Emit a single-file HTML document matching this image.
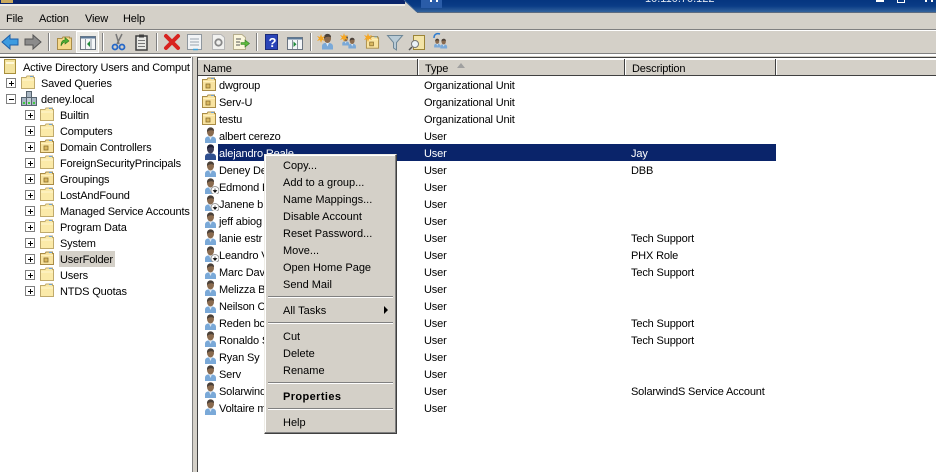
<!DOCTYPE html>
<html><head><meta charset="utf-8"><style>
html,body{margin:0;padding:0}
body{width:936px;height:472px;position:relative;overflow:hidden;background:#d4d0c8;font:11px/17px "Liberation Sans",sans-serif;letter-spacing:-.15px;color:#000}
.a,.t,.l,.m,.s{position:absolute;white-space:nowrap}
svg{position:absolute;overflow:visible}
.t{height:16px;line-height:16px;padding-top:1px}
.l{height:17px;line-height:17px;padding-top:2px}
.m{left:283px;height:17px;line-height:17px;padding-top:1px;letter-spacing:0}
.s{left:268px;width:125px;height:1px;background:#808080;border-bottom:1px solid #fff}
.v{position:absolute;top:33px;width:1px;height:18px;background:#808080;border-right:1px solid #fff}
</style></head><body>
<svg width="0" height="0" style="position:absolute"><defs>
<symbol id="fold" viewBox="0 0 16 16"><path d="M1.500 13.500V2.500H6L7 1H13.500V2.500H14.500V13.500Z" fill="#fbeaa9" stroke="#c0aa6c"/><path d="M2 5H14" stroke="#fff6d0"/><path d="M10 1.500H13" stroke="#6aa0d8"/></symbol>
<symbol id="ou" viewBox="0 0 16 16"><path d="M1.500 13.500V2.500H6L7 1H13.500V2.500H14.500V13.500Z" fill="#f8e3a0" stroke="#a98c47"/><path d="M2 4.500H14" stroke="#fff0bd"/><path d="M10 1.500H13" stroke="#6aa0d8"/><rect x="5" y="7" width="4" height="4" fill="#d9b860" stroke="#8a6d2c" stroke-width=".8"/></symbol>
<symbol id="user" viewBox="0 0 16 16"><path d="M2 16V12.500C2 10.500 4 9.500 5 9.500H9C11.500 9.500 13 11 13 13V16Z" fill="#7aa9d8"/><path d="M6 9.500L7.500 13L9 9.500Z" fill="#dce8f4"/><ellipse cx="7.500" cy="5" rx="3.500" ry="4.500" fill="#8a6b4f"/><path d="M4 5C3.700 1.200 6 .4 7.800 .4C10 .4 11.300 2.500 11 4C9 2.800 6 3 4 5Z" fill="#4a4038"/></symbol>
<symbol id="userd" viewBox="0 0 16 16"><path d="M2 16V12.500C2 10.500 4 9.500 5 9.500H9C11.500 9.500 13 11 13 13V16Z" fill="#2f4f8f"/><ellipse cx="7.500" cy="5" rx="3.500" ry="4.500" fill="#3e3d55"/><path d="M4 5C3.700 1.200 6 .4 7.800 .4C10 .4 11.300 2.500 11 4C9 2.800 6 3 4 5Z" fill="#1d1d33"/></symbol>
<symbol id="userx" viewBox="0 0 16 16"><use href="#user" width="16" height="16"/><circle cx="12" cy="12.500" r="4" fill="#fff" stroke="#9a9a9a"/><path d="M12 10.500V13M10.300 12.500H13.700L12 14.500Z" fill="#111" stroke="#111" stroke-width=".7"/></symbol>
</defs></svg>

<!-- title bar -->
<div class="a" style="left:0;top:0;width:405px;height:4px;background:#0a246a"></div>
<div class="a" style="left:0;top:4px;width:405px;height:2px;background:#eeece6"></div>
<div class="a" style="left:1px;top:0;width:12px;height:3px;background:#c9a85c"></div>
<svg style="left:0;top:0" width="936" height="14"><defs><linearGradient id="tb" x1="0" y1="0" x2="0" y2="1"><stop offset="0" stop-color="#05357f"/><stop offset=".5" stop-color="#0a3c86"/><stop offset="1" stop-color="#33639d"/></linearGradient></defs><path d="M404 0H936V12H417Z" fill="url(#tb)"/><path d="M417 12.500H936" stroke="#5c6b80"/><path d="M404 0L417 12" stroke="#3a5f92"/><rect x="421" y="0" width="21" height="8" fill="#2a5ca8"/></svg>
<div class="a" style="left:430px;top:-3px;width:2px;height:5px;background:#fff"></div><div class="a" style="left:436px;top:-3px;width:2px;height:5px;background:#fff"></div>
<div class="a" style="left:645px;top:-8px;color:#dfe6f0;line-height:14px;letter-spacing:0">10.110.70.122</div>
<div class="a" style="left:876px;top:0;width:8px;height:2px;background:#fff"></div>
<div class="a" style="left:897px;top:0;width:6px;height:2px;border:1px solid #fff;border-top:0"></div>
<div class="a" style="left:925px;top:0;width:2px;height:2px;background:#fff"></div><div class="a" style="left:931px;top:0;width:2px;height:2px;background:#fff"></div>

<!-- menu -->
<div class="l" style="left:6px;top:9px">File</div>
<div class="l" style="left:39px;top:9px">Action</div>
<div class="l" style="left:85px;top:9px">View</div>
<div class="l" style="left:123px;top:9px">Help</div>
<div class="a" style="left:0;top:29px;width:936px;height:1px;background:#808080"></div>
<div class="a" style="left:0;top:30px;width:936px;height:1px;background:#fff"></div>

<!-- toolbar -->
<div class="a" style="left:0;top:53px;width:936px;height:1px;background:#808080"></div>
<div class="a" style="left:0;top:54px;width:936px;height:2px;background:#fff"></div>
<div class="v" style="left:48px"></div><div class="v" style="left:102px"></div><div class="v" style="left:156px"></div><div class="v" style="left:256px"></div><div class="v" style="left:310px"></div>
<svg style="left:0;top:0" width="936" height="56">
<path d="M2 42L10 35V39H18V45H10V49Z" fill="#3d9be0" stroke="#1d5fa8"/>
<path d="M41 42L33 35V39H25V45H33V49Z" fill="#8b8b8b" stroke="#555"/>
<path d="M57.500 49.500V38.500H62L63 37H69.500V38H71.500V49.500Z" fill="#f5d98b" stroke="#a98c47"/><path d="M61 46C61 41 63 40 65 40V37.500L69 41L65 44V42C63 42 62 44 61 46Z" fill="#4fae35" stroke="#2c7a1c" stroke-width=".6"/>
<rect x="76.500" y="31.500" width="22" height="21" fill="#ecebe6" stroke="#fff"/>
<rect x="80.500" y="36.500" width="15" height="13" fill="#f4f6f8" stroke="#6b7480"/><path d="M81 37.500H95" stroke="#5b7896" stroke-width="2"/><path d="M85.500 39V49M91 39V49" stroke="#8b95a0"/><path d="M90 41V47L87 44Z" fill="#1e8a3a"/>
<path d="M122 34L117 44M116 34L119 44" stroke="#777" stroke-width="1.500"/><circle cx="115" cy="47" r="2.500" fill="none" stroke="#2668c8" stroke-width="1.800"/><circle cx="122" cy="47" r="2.500" fill="none" stroke="#2668c8" stroke-width="1.800"/>
<rect x="136" y="36" width="11" height="14" fill="#e8e8e4" stroke="#3f3f3f" stroke-width="1.500"/><rect x="139" y="34.500" width="5" height="3" fill="#3f3f3f"/><path d="M138 40.500H145M138 43.500H145M138 46.500H145" stroke="#777"/>
<path d="M166 36L178 48M178 36L166 48" stroke="#d8231f" stroke-width="4" stroke-linecap="round"/>
<rect x="187.500" y="34.500" width="14" height="15" fill="#f2f4f6" stroke="#8f979e"/><path d="M190 39H199M190 42H199M190 45H199" stroke="#9aa4ad"/><path d="M193 49.500H198" stroke="#3ea4dc" stroke-width="1.500"/>
<path d="M212.500 34.500H221L224.500 37.500V49.500H212.500Z" fill="#f1f1ef" stroke="#b5b5b5"/><circle cx="218.500" cy="42.500" r="3.200" fill="none" stroke="#888" stroke-width="1.800"/>
<path d="M233.500 34.500H242L245.500 37.500V49.500H233.500Z" fill="#fbf6dc" stroke="#b5ad8d"/><path d="M236 39H241M236 42H240M236 45H240" stroke="#555"/><path d="M241 42.500H245V40L249.500 43.500L245 47V44.500H241Z" fill="#5cb93c" stroke="#328024" stroke-width=".6"/>
<rect x="265.500" y="34.500" width="12" height="15" fill="#2a44b8" stroke="#1a2a78"/>
<text x="268.500" y="47" font-family="Liberation Sans" font-size="13" font-weight="bold" fill="#fff">?</text>
<rect x="287.500" y="37.500" width="15" height="12" fill="#f4f6f8" stroke="#6b7480"/><path d="M288 38.500H302" stroke="#5b7896" stroke-width="2"/><path d="M292.500 40V49M297.500 40V49" stroke="#8b95a0"/><path d="M293.500 41.500V47L296.500 44.200Z" fill="#1e8a3a"/>
</svg>
<svg style="left:320px;top:33px" width="16" height="17"><use href="#user" width="16" height="17"/></svg>
<svg style="left:347px;top:36px" width="11" height="14"><use href="#user" width="11" height="14"/></svg>
<svg style="left:341px;top:34px" width="10" height="13"><use href="#user" width="10" height="13"/></svg>
<svg style="left:365px;top:35px" width="15" height="16"><use href="#ou" width="15" height="16"/></svg>
<svg style="left:0;top:0" width="936" height="56">
<path d="M321 34L322 37L325 36L323 38.500L325 41L322 40L321 43L320 40L317 41L319 38.500L317 36L320 37Z" fill="#f5a623"/>
<path d="M344 33L345 36L348 35L346 37.500L348 40L345 39L344 42L343 39L340 40L342 37.500L340 35L343 36Z" fill="#f5a623"/>
<path d="M368 33L369 36L372 35L370 37.500L372 40L369 39L368 42L367 39L364 40L366 37.500L364 35L367 36Z" fill="#f5a623"/>
<path d="M387.500 35.500H402.500L396.500 42.500V50L393.500 48V42.500Z" fill="#b9cbd6" stroke="#6e8797"/>
<rect x="413.500" y="35.500" width="11" height="14" fill="#f3e4a7" stroke="#9b8436"/><circle cx="415" cy="44" r="3.500" fill="#eaf2f8" stroke="#777"/><path d="M412 47L409 50" stroke="#555" stroke-width="1.500"/>
<path d="M434 38C434 34 437 33 440 34" fill="none" stroke="#2a7ad0" stroke-width="1.500"/>
</svg>
<svg style="left:439px;top:37px" width="10" height="13"><use href="#user" width="10" height="13"/></svg>
<svg style="left:433px;top:37px" width="9" height="12"><use href="#user" width="9" height="12"/></svg>

<!-- panes -->
<div class="a" style="left:0;top:57px;width:192px;height:415px;background:#fff;border-top:1px solid #404040;box-sizing:border-box"></div>
<div class="a" style="left:191px;top:57px;width:1px;height:415px;background:#fff"></div>
<div class="a" style="left:192px;top:57px;width:1px;height:415px;background:#808080"></div>
<div class="a" style="left:197px;top:57px;width:739px;height:415px;background:#fff;border-left:1px solid #404040;border-top:1px solid #404040;box-sizing:border-box"></div>

<!-- tree -->
<svg style="left:3px;top:59px" width="14" height="16"><rect x="1.500" y=".5" width="11" height="14" fill="#f3e3a0" stroke="#a88f3c"/><rect x="3" y="3" width="8" height="2" fill="#fff8d8"/></svg>
<div class="t" style="left:23px;top:59px;width:167px;overflow:hidden">Active Directory Users and Computers</div>

<svg style="left:0;top:70px" width="60" height="240" fill="none">
<g stroke="#808080"><rect x="6.500" y="8.500" width="9" height="9" fill="#fff"/><rect x="6.500" y="24.500" width="9" height="9" fill="#fff"/>
<rect x="25.500" y="40.500" width="9" height="9" fill="#fff"/><rect x="25.500" y="56.500" width="9" height="9" fill="#fff"/><rect x="25.500" y="72.500" width="9" height="9" fill="#fff"/><rect x="25.500" y="88.500" width="9" height="9" fill="#fff"/><rect x="25.500" y="104.500" width="9" height="9" fill="#fff"/><rect x="25.500" y="120.500" width="9" height="9" fill="#fff"/><rect x="25.500" y="136.500" width="9" height="9" fill="#fff"/><rect x="25.500" y="152.500" width="9" height="9" fill="#fff"/><rect x="25.500" y="168.500" width="9" height="9" fill="#fff"/><rect x="25.500" y="184.500" width="9" height="9" fill="#fff"/><rect x="25.500" y="200.500" width="9" height="9" fill="#fff"/><rect x="25.500" y="216.500" width="9" height="9" fill="#fff"/></g>
<path stroke="#000" d="M9 13.500H14M11.500 11V16M9 29.500H14
M28 45.500H33M30.500 43V48M28 61.500H33M30.500 59V64M28 77.500H33M30.500 75V80M28 93.500H33M30.500 91V96M28 109.500H33M30.500 107V112M28 125.500H33M30.500 123V128M28 141.500H33M30.500 139V144M28 157.500H33M30.500 155V160M28 173.500H33M30.500 171V176M28 189.500H33M30.500 187V192M28 205.500H33M30.500 203V208M28 221.500H33M30.500 219V224"/>
</svg>

<svg style="left:20px;top:75px" width="16" height="16"><use href="#fold" width="16" height="16"/></svg>
<svg style="left:21px;top:91px" width="16" height="16"><rect x="5.500" y=".5" width="5" height="7" fill="#a9b7c4" stroke="#56646f"/><rect x=".5" y="6.500" width="5" height="8" fill="#a9b7c4" stroke="#56646f"/><rect x="5.500" y="6.500" width="5" height="8" fill="#c2cdd6" stroke="#56646f"/><rect x="10.500" y="6.500" width="5" height="8" fill="#a9b7c4" stroke="#56646f"/><rect x="2" y="11" width="2" height="2" fill="#3ecb3e"/><rect x="7" y="11" width="2" height="2" fill="#3ecb3e"/><rect x="12" y="11" width="2" height="2" fill="#3ecb3e"/></svg>
<div class="t" style="left:41px;top:75px">Saved Queries</div>
<div class="t" style="left:41px;top:91px">deney.local</div>

<svg style="left:39px;top:107px" width="16" height="16"><use href="#fold" width="16" height="16"/></svg>
<svg style="left:39px;top:123px" width="16" height="16"><use href="#fold" width="16" height="16"/></svg>
<svg style="left:39px;top:139px" width="16" height="16"><use href="#ou" width="16" height="16"/></svg>
<svg style="left:39px;top:155px" width="16" height="16"><use href="#fold" width="16" height="16"/></svg>
<svg style="left:39px;top:171px" width="16" height="16"><use href="#ou" width="16" height="16"/></svg>
<svg style="left:39px;top:187px" width="16" height="16"><use href="#fold" width="16" height="16"/></svg>
<svg style="left:39px;top:203px" width="16" height="16"><use href="#fold" width="16" height="16"/></svg>
<svg style="left:39px;top:219px" width="16" height="16"><use href="#fold" width="16" height="16"/></svg>
<svg style="left:39px;top:235px" width="16" height="16"><use href="#fold" width="16" height="16"/></svg>
<svg style="left:39px;top:251px" width="16" height="16"><use href="#ou" width="16" height="16"/></svg>
<svg style="left:39px;top:267px" width="16" height="16"><use href="#fold" width="16" height="16"/></svg>
<svg style="left:39px;top:283px" width="16" height="16"><use href="#fold" width="16" height="16"/></svg>
<div class="a" style="left:59px;top:251px;width:56px;height:16px;background:#d4d0c8"></div>
<div class="t" style="left:60px;top:107px">Builtin</div>
<div class="t" style="left:60px;top:123px">Computers</div>
<div class="t" style="left:60px;top:139px">Domain Controllers</div>
<div class="t" style="left:60px;top:155px">ForeignSecurityPrincipals</div>
<div class="t" style="left:60px;top:171px">Groupings</div>
<div class="t" style="left:60px;top:187px">LostAndFound</div>
<div class="t" style="left:60px;top:203px">Managed Service Accounts</div>
<div class="t" style="left:60px;top:219px">Program Data</div>
<div class="t" style="left:60px;top:235px">System</div>
<div class="t" style="left:60px;top:251px">UserFolder</div>
<div class="t" style="left:60px;top:267px">Users</div>
<div class="t" style="left:60px;top:283px">NTDS Quotas</div>

<!-- header -->
<div class="a" style="left:198px;top:59px;width:738px;height:15px;background:#d4d0c8;border-bottom:1px solid #808080;border-top:1px solid #fff"></div>
<div class="a" style="left:198px;top:76px;width:738px;height:1px;background:#fff"></div>
<div class="a" style="left:198px;top:75px;width:738px;height:1px;background:#404040"></div>
<div class="a" style="left:417px;top:59px;width:1px;height:16px;background:#404040"></div><div class="a" style="left:418px;top:59px;width:1px;height:16px;background:#fff"></div>
<div class="a" style="left:624px;top:59px;width:1px;height:16px;background:#404040"></div><div class="a" style="left:625px;top:59px;width:1px;height:16px;background:#fff"></div>
<div class="a" style="left:775px;top:59px;width:1px;height:16px;background:#404040"></div><div class="a" style="left:776px;top:59px;width:1px;height:16px;background:#fff"></div>
<div class="l" style="left:203px;top:59px">Name</div>
<div class="l" style="left:425px;top:59px">Type</div>
<div class="l" style="left:632px;top:59px">Description</div>
<svg style="left:457px;top:63px" width="10" height="6"><path d="M4 0L8 5H0Z" fill="#a0a0a0"/></svg>

<!-- selection -->
<div class="a" style="left:218px;top:144px;width:558px;height:17px;background:#0a246a"></div>

<!-- list icons -->
<svg style="left:201px;top:77px" width="16" height="16"><use href="#ou" width="16" height="16"/></svg>
<svg style="left:201px;top:94px" width="16" height="16"><use href="#ou" width="16" height="16"/></svg>
<svg style="left:201px;top:111px" width="16" height="16"><use href="#ou" width="16" height="16"/></svg>
<svg style="left:203px;top:127px" width="16" height="16"><use href="#user" width="16" height="16"/></svg>
<svg style="left:203px;top:144px" width="16" height="16"><use href="#userd" width="16" height="16"/></svg>
<svg style="left:203px;top:161px" width="16" height="16"><use href="#user" width="16" height="16"/></svg>
<svg style="left:203px;top:178px" width="16" height="16"><use href="#userx" width="16" height="16"/></svg>
<svg style="left:203px;top:195px" width="16" height="16"><use href="#userx" width="16" height="16"/></svg>
<svg style="left:203px;top:212px" width="16" height="16"><use href="#user" width="16" height="16"/></svg>
<svg style="left:203px;top:229px" width="16" height="16"><use href="#user" width="16" height="16"/></svg>
<svg style="left:203px;top:246px" width="16" height="16"><use href="#userx" width="16" height="16"/></svg>
<svg style="left:203px;top:263px" width="16" height="16"><use href="#user" width="16" height="16"/></svg>
<svg style="left:203px;top:280px" width="16" height="16"><use href="#user" width="16" height="16"/></svg>
<svg style="left:203px;top:297px" width="16" height="16"><use href="#user" width="16" height="16"/></svg>
<svg style="left:203px;top:314px" width="16" height="16"><use href="#user" width="16" height="16"/></svg>
<svg style="left:203px;top:331px" width="16" height="16"><use href="#user" width="16" height="16"/></svg>
<svg style="left:203px;top:348px" width="16" height="16"><use href="#user" width="16" height="16"/></svg>
<svg style="left:203px;top:365px" width="16" height="16"><use href="#user" width="16" height="16"/></svg>
<svg style="left:203px;top:382px" width="16" height="16"><use href="#user" width="16" height="16"/></svg>
<svg style="left:203px;top:399px" width="16" height="16"><use href="#user" width="16" height="16"/></svg>

<!-- names -->
<div class="l" style="left:219px;top:76px">dwgroup</div>
<div class="l" style="left:219px;top:93px">Serv-U</div>
<div class="l" style="left:219px;top:110px">testu</div>
<div class="l" style="left:219px;top:127px">albert cerezo</div>
<div class="l" style="left:219px;top:144px;color:#fff">alejandro Reale</div>
<div class="l" style="left:219px;top:161px">Deney De</div>
<div class="l" style="left:219px;top:178px">Edmond B</div>
<div class="l" style="left:219px;top:195px">Janene b</div>
<div class="l" style="left:219px;top:212px">jeff abiog</div>
<div class="l" style="left:219px;top:229px">lanie estr</div>
<div class="l" style="left:219px;top:246px">Leandro V</div>
<div class="l" style="left:219px;top:263px">Marc Dav</div>
<div class="l" style="left:219px;top:280px">Melizza B</div>
<div class="l" style="left:219px;top:297px">Neilson C</div>
<div class="l" style="left:219px;top:314px">Reden bc</div>
<div class="l" style="left:219px;top:331px">Ronaldo S</div>
<div class="l" style="left:219px;top:348px">Ryan Sy</div>
<div class="l" style="left:219px;top:365px">Serv</div>
<div class="l" style="left:219px;top:382px">Solarwinds</div>
<div class="l" style="left:219px;top:399px">Voltaire m</div>

<!-- types -->
<div class="l" style="left:424px;top:76px">Organizational Unit</div>
<div class="l" style="left:424px;top:93px">Organizational Unit</div>
<div class="l" style="left:424px;top:110px">Organizational Unit</div>
<div class="l" style="left:424px;top:127px">User</div>
<div class="l" style="left:424px;top:144px;color:#fff">User</div>
<div class="l" style="left:424px;top:161px">User</div>
<div class="l" style="left:424px;top:178px">User</div>
<div class="l" style="left:424px;top:195px">User</div>
<div class="l" style="left:424px;top:212px">User</div>
<div class="l" style="left:424px;top:229px">User</div>
<div class="l" style="left:424px;top:246px">User</div>
<div class="l" style="left:424px;top:263px">User</div>
<div class="l" style="left:424px;top:280px">User</div>
<div class="l" style="left:424px;top:297px">User</div>
<div class="l" style="left:424px;top:314px">User</div>
<div class="l" style="left:424px;top:331px">User</div>
<div class="l" style="left:424px;top:348px">User</div>
<div class="l" style="left:424px;top:365px">User</div>
<div class="l" style="left:424px;top:382px">User</div>
<div class="l" style="left:424px;top:399px">User</div>

<!-- descriptions -->
<div class="l" style="left:631px;top:144px;color:#fff">Jay</div>
<div class="l" style="left:631px;top:161px">DBB</div>
<div class="l" style="left:631px;top:229px">Tech Support</div>
<div class="l" style="left:631px;top:246px">PHX Role</div>
<div class="l" style="left:631px;top:263px">Tech Support</div>
<div class="l" style="left:631px;top:314px">Tech Support</div>
<div class="l" style="left:631px;top:331px">Tech Support</div>
<div class="l" style="left:631px;top:382px">SolarwindS Service Account</div>

<!-- context menu -->
<div class="a" style="left:264px;top:154px;width:133px;height:280px;background:#d4d0c8;box-sizing:border-box;border:1px solid;border-color:#eeece6 #404040 #404040 #eeece6;box-shadow:inset -1px -1px 0 #808080,inset 1px 1px 0 #fff"></div>
<div class="m" style="top:157px">Copy...</div>
<div class="m" style="top:174px">Add to a group...</div>
<div class="m" style="top:191px">Name Mappings...</div>
<div class="m" style="top:208px">Disable Account</div>
<div class="m" style="top:225px">Reset Password...</div>
<div class="m" style="top:242px">Move...</div>
<div class="m" style="top:259px">Open Home Page</div>
<div class="m" style="top:276px">Send Mail</div>
<div class="s" style="top:296px"></div>
<div class="m" style="top:302px">All Tasks</div>
<svg style="left:384px;top:306px" width="5" height="8"><path d="M0 0L4 4L0 8Z" fill="#000"/></svg>
<div class="s" style="top:322px"></div>
<div class="m" style="top:328px">Cut</div>
<div class="m" style="top:345px">Delete</div>
<div class="m" style="top:362px">Rename</div>
<div class="s" style="top:382px"></div>
<div class="m" style="top:388px;font-weight:bold;letter-spacing:.4px">Properties</div>
<div class="s" style="top:408px"></div>
<div class="m" style="top:414px">Help</div>
</body></html>
